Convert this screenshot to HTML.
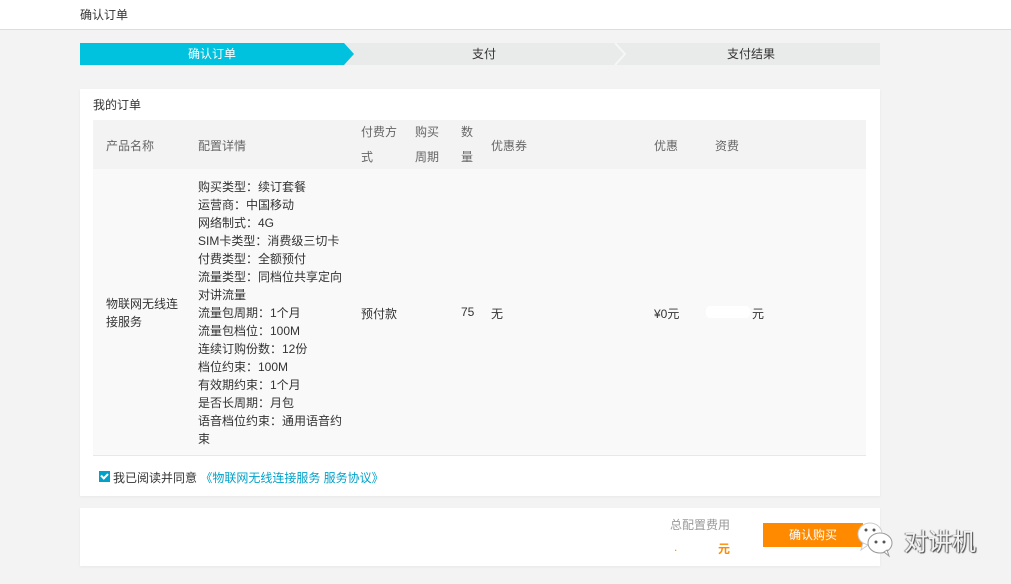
<!DOCTYPE html>
<html><head><meta charset="utf-8"><style>
*{margin:0;padding:0;box-sizing:border-box}
body{width:1011px;height:584px;background:#f3f3f3;font-family:"Liberation Sans","Noto Sans CJK SC",sans-serif;font-size:12px;color:#333;position:relative;overflow:hidden}
.a{position:absolute;white-space:nowrap}
.top{position:absolute;left:0;top:0;width:1011px;height:30px;background:#fff;border-bottom:1px solid #ddd}
.card{position:absolute;background:#fff;box-shadow:0 1px 3px rgba(0,0,0,.05)}
.g{color:#666}
</style></head><body>
<div class="top"></div>
<div class="a" style="left:80px;top:6px;font-size:12px">确认订单</div>

<svg class="a" style="left:80px;top:43px" width="800" height="22">
<rect x="0" y="0" width="800" height="22" fill="#e9eaea"/>
<polygon points="0,0 264,0 274,11 264,22 0,22" fill="#00c1de"/>
<polyline points="535,0 545,11 535,22" fill="none" stroke="#f6f6f6" stroke-width="2"/>
</svg>
<div class="a" style="left:188px;top:45px;color:#fff;font-size:12px">确认订单</div>
<div class="a" style="left:472px;top:45px">支付</div>
<div class="a" style="left:727px;top:45px">支付结果</div>

<div class="card" style="left:80px;top:89px;width:800px;height:407px"></div>
<div class="a" style="left:93px;top:96px">我的订单</div>
<div class="a" style="left:93px;top:120px;width:773px;height:49px;background:#f3f3f3"></div>
<div class="a" style="left:93px;top:169px;width:773px;height:287px;background:#f9f9f9;border-bottom:1px solid #e8e8e8"></div>
<div class="a g" style="left:106px;top:137px">产品名称</div>
<div class="a g" style="left:198px;top:137px">配置详情</div>
<div class="a g" style="left:361px;top:120px;line-height:25px">付费方<br>式</div>
<div class="a g" style="left:415px;top:120px;line-height:25px">购买<br>周期</div>
<div class="a g" style="left:461px;top:120px;line-height:25px">数<br>量</div>
<div class="a g" style="left:491px;top:137px">优惠券</div>
<div class="a g" style="left:654px;top:137px">优惠</div>
<div class="a g" style="left:715px;top:137px">资费</div>

<div class="a" style="left:106px;top:295px;line-height:18px">物联网无线连<br>接服务</div>
<div class="a" style="left:198px;top:178px;line-height:18px">购买类型：续订套餐<br>运营商：中国移动<br>网络制式：4G<br>SIM卡类型：消费级三切卡<br>付费类型：全额预付<br>流量类型：同档位共享定向<br>对讲流量<br>流量包周期：1个月<br>流量包档位：100M<br>连续订购份数：12份<br>档位约束：100M<br>有效期约束：1个月<br>是否长周期：月包<br>语音档位约束：通用语音约<br>束</div>
<div class="a" style="left:361px;top:305px">预付款</div>
<div class="a" style="left:461px;top:305px">75</div>
<div class="a" style="left:491px;top:305px">无</div>
<div class="a" style="left:654px;top:305px">¥0元</div>
<div class="a" style="left:706px;top:306px;width:44px;height:12px;background:#fff;border-radius:4px"></div>
<div class="a" style="left:752px;top:305px">元</div>

<div class="a" style="left:99px;top:471px;width:11px;height:11px;background:#00a2ca"></div>
<div class="a" style="left:102px;top:472px;width:5px;height:7px;border-right:2px solid #fff;border-bottom:2px solid #fff;transform:rotate(45deg)"></div>
<div class="a" style="left:113px;top:469px">我已阅读并同意 <span style="color:#00a2ca">《物联网无线连接服务 服务协议》</span></div>

<div class="card" style="left:80px;top:508px;width:800px;height:58px"></div>
<div class="a" style="left:670px;top:516px;color:#999">总配置费用</div>
<div class="a" style="left:674px;top:540px;color:#ff8a00">.</div>
<div class="a" style="left:718px;top:540px;color:#ff8a00;font-weight:bold">元</div>
<div class="a" style="left:763px;top:523px;width:100px;height:24px;background:#ff8a00;color:#fff;text-align:center;line-height:24px">确认购买</div>

<svg class="a" style="left:857px;top:520px" width="40" height="38">
<ellipse cx="13" cy="14" rx="12" ry="11" fill="#fff" stroke="#ccc"/>
<path d="M6 23 L4 30 L11 25 Z" fill="#fff" stroke="#ccc"/>
<ellipse cx="23" cy="23" rx="12" ry="10" fill="#fff" stroke="#999"/>
<path d="M27 32 L32 36 L30 30 Z" fill="#fff" stroke="#999"/>
<circle cx="9" cy="10" r="1.5" fill="#555"/><circle cx="17" cy="10" r="1.5" fill="#555"/>
<circle cx="19" cy="22" r="1.5" fill="#555"/><circle cx="27" cy="22" r="1.5" fill="#555"/>
</svg>
<div class="a" style="left:904px;top:522px;font-size:24px;color:#f2f2f2;text-shadow:1px 1px 1px #444,-1px 0 1px #777">对讲机</div>
</body></html>
